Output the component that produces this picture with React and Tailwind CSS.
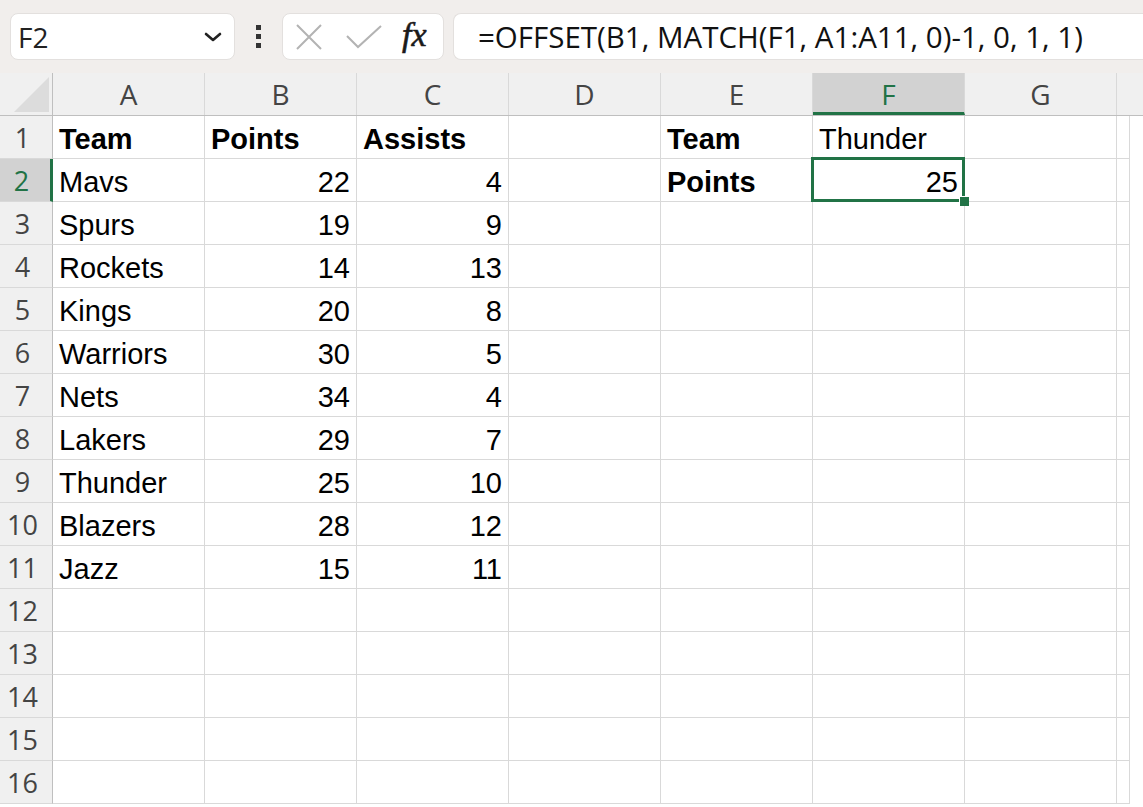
import React from 'react';

const cols = ['A', 'B', 'C', 'D', 'E', 'F', 'G', 'H'];

const data = [
  ['Team', 'Points', 'Assists'],
  ['Mavs', 22, 4],
  ['Spurs', 19, 9],
  ['Rockets', 14, 13],
  ['Kings', 20, 8],
  ['Warriors', 30, 5],
  ['Nets', 34, 4],
  ['Lakers', 29, 7],
  ['Thunder', 25, 10],
  ['Blazers', 28, 12],
  ['Jazz', 15, 11],
];

function cellValue(r, c) {
  if (r < 11 && c < 3) return data[r][c];
  if (r === 0 && c === 4) return 'Team';
  if (r === 1 && c === 4) return 'Points';
  if (r === 0 && c === 5) return 'Thunder';
  if (r === 1 && c === 5) return 25;
  return '';
}

function Cell({ r, c }) {
  const v = cellValue(r, c);
  const bold = r === 0 && c < 3 ? true : c === 4 && r < 2;
  const isNum = typeof v === 'number';
  const selected = r === 1 && c === 5;
  return (
    <div
      className={`relative h-[43px] border-r border-b border-[#d9d9d9] flex items-center px-[6px] overflow-visible whitespace-nowrap text-[29px] text-black ${
        isNum ? 'justify-end' : 'justify-start'
      } ${bold ? 'font-bold' : ''} ${c === 7 ? '' : 'w-[152px]'} ${selected ? 'z-10' : ''}`}
    >
      <span className="pt-[5px]">{v}</span>
      {selected && (
        <>
          <div className="absolute -left-[2px] -top-[2px] -right-[1px] -bottom-[1px] border-[3px] border-[#217346] pointer-events-none" />
          <div className="absolute -right-[5px] -bottom-[5px] w-[10px] h-[10px] bg-[#217346] border-l border-t border-white" />
        </>
      )}
    </div>
  );
}

export default function App() {
  const rows = Array.from({ length: 16 }, (_, i) => i);
  return (
    <div
      className="w-[1143px] h-[807px] overflow-hidden bg-white"
      style={{ fontFamily: '"Liberation Sans", Arial, sans-serif' }}
    >
      {/* Formula bar */}
      <div className="h-[73px] bg-[#f1eeec] flex items-center pl-[10px] gap-0">
        <div className="w-[225px] h-[47px] bg-white rounded-[8px] border border-[#e3e0de] flex items-center justify-between pl-[7px] pr-[12px]">
          <span className="text-[28px] text-[#222]" style={{ fontFamily: '"Open Sans", sans-serif' }}>F2</span>
          <svg width="18" height="12" viewBox="0 0 18 12">
            <path d="M2 3 L9 9 L16 3" fill="none" stroke="#222" strokeWidth="2.6" strokeLinecap="round" strokeLinejoin="round" />
          </svg>
        </div>
        <div className="w-[47px] flex flex-col items-center gap-[4px]">
          <div className="w-[5px] h-[5px] bg-[#333]" />
          <div className="w-[5px] h-[5px] bg-[#333]" />
          <div className="w-[5px] h-[5px] bg-[#333]" />
        </div>
        <div className="w-[162px] h-[47px] bg-white rounded-[8px] border border-[#e3e0de] flex items-center pl-[12px]">
          <svg width="28" height="28" viewBox="0 0 28 28">
            <path d="M2 2 L26 26 M26 2 L2 26" stroke="#b3b3b3" strokeWidth="2" fill="none" />
          </svg>
          <svg width="38" height="26" viewBox="0 0 38 26" className="ml-[22px]">
            <path d="M2 12 L13 23 L36 2" stroke="#b3b3b3" strokeWidth="2" fill="none" />
          </svg>
          <span
            className="ml-[19px] text-[34px] italic text-[#1a1a1a] leading-none -mt-[4px] [-webkit-text-stroke:0.6px_#1a1a1a]"
            style={{ fontFamily: '"Liberation Serif", "Times New Roman", serif' }}
          >
            fx
          </span>
        </div>
        <div className="ml-[9px] flex-1 h-[47px] bg-white rounded-l-[8px] border border-r-0 border-[#e3e0de] flex items-center pl-[24px]">
          <span className="text-[29.5px] text-[#111] whitespace-nowrap pt-[1px]" style={{ fontFamily: '"Open Sans", sans-serif' }}>
            =OFFSET(B1, MATCH(F1, A1:A11, 0)-1, 0, 1, 1)
          </span>
        </div>
      </div>

      {/* Column headers */}
      <div className="flex h-[43px] bg-[#f0f0f0] border-b border-[#bfbfbf]" style={{ fontFamily: '"Open Sans", sans-serif' }}>
        <div className="relative w-[53px] h-full border-r border-[#bfbfbf]">
          <svg width="36" height="36" viewBox="0 0 36 36" className="absolute left-[14px] top-[4px]">
            <path d="M35 0 L35 35 L0 35 Z" fill="#dcdcdc" />
          </svg>
        </div>
        {cols.map((c) => (
          <div
            key={c}
            className={`h-full flex items-center justify-center text-[28px] ${c === 'H' ? 'flex-1' : 'w-[152px] border-r border-[#d9d9d9]'} ${
              c === 'F' ? 'bg-[#d2d2d2] text-[#217346] border-b-[3px] border-b-[#217346] pt-[3px]' : 'text-[#444]'
            }`}
          >
            {c === 'H' ? '' : c}
          </div>
        ))}
      </div>

      {/* Rows */}
      {rows.map((r) => (
        <div key={r} className="flex">
          <div
            className={`w-[53px] h-[43px] border-b border-[#d9d9d9] flex items-center justify-center pr-[7px] pt-[3px] text-[27px] ${
              r === 1
                ? 'bg-[#d2d2d2] text-[#217346] border-r-[3px] border-r-[#217346]'
                : 'bg-[#f0f0f0] text-[#444] border-r border-r-[#bfbfbf]'
            }`}
            style={{ fontFamily: '"Open Sans", sans-serif' }}
          >
            {r + 1}
          </div>
          {cols.map((c, ci) => (
            <Cell key={c} r={r} c={ci} />
          ))}
        </div>
      ))}
    </div>
  );
}
